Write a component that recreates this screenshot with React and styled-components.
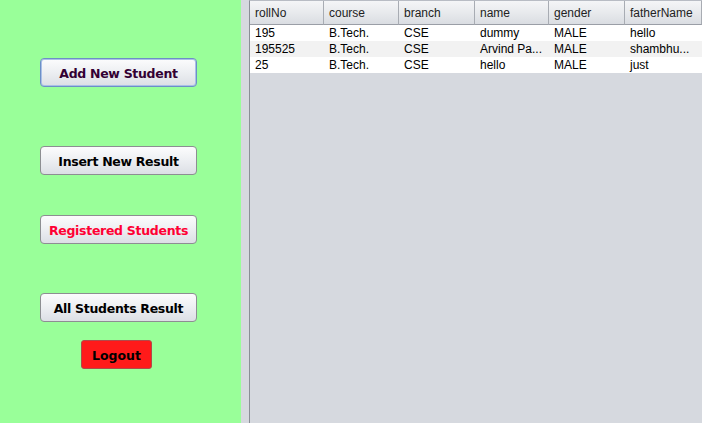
import React from 'react'
import styled, { createGlobalStyle } from 'styled-components'

const GlobalStyle = createGlobalStyle`
    html, body {
        margin: 0;
        padding: 0;
        height: 100%;
        overflow: hidden;
    }
    #root {
        height: 100%;
    }
`;

const Frame = styled.div`
    display: flex;
    width: 702px;
    height: 423px;
    font-family: "Liberation Sans", Arial, sans-serif;
`;

const SidePanel = styled.div`
    width: 241px;
    background-color: #99ff99;
    display: flex;
    flex-direction: column;
    align-items: flex-start;
    padding-left: 40px;
    box-sizing: border-box;
`;

const NavButton = styled.button`
    width: 157px;
    height: 29px;
    margin-top: ${({ gap }) => gap}px;
    box-sizing: border-box;
    border: 1px solid ${({ focused }) => focused ? '#6d8fc7' : '#8d8e92'};
    box-shadow: ${({ focused }) => focused ? 'inset 0 0 0 1px #a9c0e6' : 'none'};
    border-radius: 4px;
    background: linear-gradient(#fcfcfd, #eef0f3 45%, #dcdfe5);
    color: ${({ color }) => color || '#000'};
    font-family: "DejaVu Sans", Tahoma, sans-serif;
    font-weight: bold;
    font-size: 12.5px;
    letter-spacing: -0.3px;
    padding: 2px 0 0;
    cursor: pointer;
`;

const LogoutButton = styled.button`
    width: 71px;
    height: 29px;
    margin-top: 18px;
    margin-left: 41px;
    box-sizing: border-box;
    border: 1px solid #b04a4a;
    border-radius: 3px;
    background: #ff1a1a;
    color: #000;
    font-family: "DejaVu Sans", Tahoma, sans-serif;
    font-weight: bold;
    font-size: 12.5px;
    padding: 2px 0 0;
    cursor: pointer;
`;

const Gutter = styled.div`
    width: 8px;
    background-color: #d6d9df;
`;

const TableArea = styled.div`
    flex: 1;
    background-color: #d6d9df;
    border-left: 1px solid #8a8e96;
    border-top: 1px solid #b8bcc4;
    display: flex;
    flex-direction: column;
`;

const Grid = styled.div`
    display: grid;
    grid-template-columns: 74px 75px 76px 74px 76px 1fr;
`;

const HeadCell = styled.div`
    height: 24px;
    box-sizing: border-box;
    padding: 1px 0 0 5px;
    display: flex;
    align-items: center;
    font-size: 12px;
    color: #222;
    background: linear-gradient(#f4f5f7, #e8eaed 50%, #dadde2);
    border-right: 1px solid #a8acb3;
    border-bottom: 1px solid #9a9ea6;
    &:last-child {
        border-right: none;
    }
`;

const Cell = styled.div`
    height: 16px;
    padding-left: 5px;
    display: flex;
    align-items: center;
    font-size: 12px;
    color: #000;
    white-space: nowrap;
    overflow: hidden;
    background-color: ${({ striped }) => striped ? '#f2f2f2' : '#ffffff'};
`;

const columns = ['rollNo', 'course', 'branch', 'name', 'gender', 'fatherName']

const rows = [
    ['195', 'B.Tech.', 'CSE', 'dummy', 'MALE', 'hello'],
    ['195525', 'B.Tech.', 'CSE', 'Arvind Pa...', 'MALE', 'shambhu...'],
    ['25', 'B.Tech.', 'CSE', 'hello', 'MALE', 'just'],
]

const App = () => {
    return (
        <>
            <GlobalStyle />
            <Frame>
                <SidePanel>
                    <NavButton gap={58} focused color="#330033">Add New Student</NavButton>
                    <NavButton gap={59}>Insert New Result</NavButton>
                    <NavButton gap={40} color="#ff0033">Registered Students</NavButton>
                    <NavButton gap={49}>All Students Result</NavButton>
                    <LogoutButton>Logout</LogoutButton>
                </SidePanel>
                <Gutter />
                <TableArea>
                    <Grid>
                        {columns.map(col => <HeadCell key={col}>{col}</HeadCell>)}
                        {rows.map((row, i) =>
                            row.map((value, j) => (
                                <Cell key={`${i}-${j}`} striped={i % 2 === 1}>{value}</Cell>
                            ))
                        )}
                    </Grid>
                </TableArea>
            </Frame>
        </>
    )
}

export default App
